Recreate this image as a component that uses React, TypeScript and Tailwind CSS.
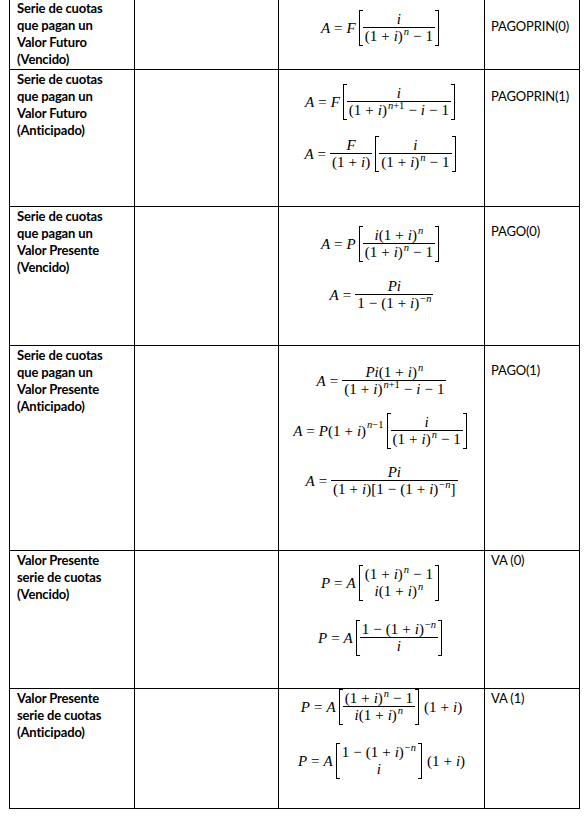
import type { ReactNode } from "react";

// small math helpers, laid out with inline flex boxes
function V({ children }: { children: ReactNode }) {
  return <i>{children}</i>;
}

function Sup({ children }: { children: ReactNode }) {
  return (
    <span className="relative -top-[6px] ml-[1px] text-[10.5px] leading-none">
      {children}
    </span>
  );
}

function Op({ children }: { children: ReactNode }) {
  return <span className="mx-[4px]">{children}</span>;
}

function Frac({
  num,
  den,
  line = true,
}: {
  num: ReactNode;
  den: ReactNode;
  line?: boolean;
}) {
  return (
    <span className="inline-flex flex-col text-center">
      <span className="whitespace-nowrap px-[2px] leading-[16px]">{num}</span>
      <span
        className={
          line
            ? "whitespace-nowrap border-t border-black px-[2px] leading-[17px]"
            : "whitespace-nowrap px-[2px] pt-[1px] leading-[17px]"
        }
      >
        {den}
      </span>
    </span>
  );
}

function Br({ children }: { children: ReactNode }) {
  return (
    <span className="mx-[3px] inline-flex items-stretch">
      <span className="my-[-1px] w-[4px] border-y border-l border-black" />
      {children}
      <span className="my-[-1px] w-[4px] border-y border-r border-black" />
    </span>
  );
}

function Eq({ children }: { children: ReactNode }) {
  return (
    <div className="flex items-center justify-center whitespace-nowrap font-['Liberation_Serif',serif] text-[15px] text-black">
      {children}
    </div>
  );
}

const onePlusI = (
  <>
    (1<Op>+</Op>
    <V>i</V>)
  </>
);

const powN = (
  <>
    {onePlusI}
    <Sup>
      <V>n</V>
    </Sup>
  </>
);

const powNeg = (
  <>
    {onePlusI}
    <Sup>
      −<V>n</V>
    </Sup>
  </>
);

const powN1 = (
  <>
    {onePlusI}
    <Sup>
      <V>n</V>+1
    </Sup>
  </>
);

const denN = (
  <>
    {powN}
    <Op>−</Op>1
  </>
);

const lhs = (a: string, b: string) => (
  <>
    <V>{a}</V>
    <Op>=</Op>
    <V>{b}</V>
  </>
);

type Row = {
  label: string[];
  code: string;
  h: string;
  eqPt: string;
  codePt: string;
  gap: string;
  eqs: ReactNode[];
};

const rows: Row[] = [
  {
    label: ["Serie de cuotas", "que pagan un", "Valor Futuro", "(Vencido)"],
    code: "PAGOPRIN(0)",
    h: "h-[70px] pt-[0px]",
    eqPt: "pt-[11px]",
    codePt: "pt-[18px]",
    gap: "gap-[20px]",
    eqs: [
      <Eq>
        {lhs("A", "F")}
        <Br>
          <Frac num={<V>i</V>} den={denN} />
        </Br>
      </Eq>,
    ],
  },
  {
    label: ["Serie de cuotas", "que pagan un", "Valor Futuro", "(Anticipado)"],
    code: "PAGOPRIN(1)",
    h: "h-[137px] pt-[1px]",
    eqPt: "pt-[15px]",
    codePt: "pt-[18px]",
    gap: "gap-[18px]",
    eqs: [
      <Eq>
        {lhs("A", "F")}
        <Br>
          <Frac
            num={<V>i</V>}
            den={
              <>
                {powN1}
                <Op>−</Op>
                <V>i</V>
                <Op>−</Op>1
              </>
            }
          />
        </Br>
      </Eq>,
      <Eq>
        <V>A</V>
        <Op>=</Op>
        <Frac num={<V>F</V>} den={onePlusI} />
        <Br>
          <Frac num={<V>i</V>} den={denN} />
        </Br>
      </Eq>,
    ],
  },
  {
    label: ["Serie de cuotas", "que pagan un", "Valor Presente", "(Vencido)"],
    code: "PAGO(0)",
    h: "h-[139px] pt-[1px]",
    eqPt: "pt-[20px]",
    codePt: "pt-[16px]",
    gap: "gap-[17px]",
    eqs: [
      <Eq>
        {lhs("A", "P")}
        <Br>
          <Frac
            num={
              <>
                <V>i</V>
                {powN}
              </>
            }
            den={denN}
          />
        </Br>
      </Eq>,
      <Eq>
        <V>A</V>
        <Op>=</Op>
        <Frac
          num={<V>Pi</V>}
          den={
            <>
              1<Op>−</Op>
              {powNeg}
            </>
          }
        />
      </Eq>,
    ],
  },
  {
    label: ["Serie de cuotas", "que pagan un", "Valor Presente", "(Anticipado)"],
    code: "PAGO(1)",
    h: "h-[205px] pt-[1px]",
    eqPt: "pt-[18px]",
    codePt: "pt-[16px]",
    gap: "gap-[16px]",
    eqs: [
      <Eq>
        <V>A</V>
        <Op>=</Op>
        <Frac
          num={
            <>
              <V>Pi</V>
              {powN}
            </>
          }
          den={
            <>
              {powN1}
              <Op>−</Op>
              <V>i</V>
              <Op>−</Op>1
            </>
          }
        />
      </Eq>,
      <Eq>
        {lhs("A", "P")}
        {onePlusI}
        <Sup>
          <V>n</V>−1
        </Sup>
        <Br>
          <Frac num={<V>i</V>} den={denN} />
        </Br>
      </Eq>,
      <Eq>
        <V>A</V>
        <Op>=</Op>
        <Frac
          num={<V>Pi</V>}
          den={
            <>
              {onePlusI}[1<Op>−</Op>
              {powNeg}]
            </>
          }
        />
      </Eq>,
    ],
  },
  {
    label: ["Valor Presente", "serie de cuotas", "(Vencido)"],
    code: "VA (0)",
    h: "h-[138px] pt-[1px]",
    eqPt: "pt-[15px]",
    codePt: "pt-[0px]",
    gap: "gap-[21px]",
    eqs: [
      <Eq>
        {lhs("P", "A")}
        <Br>
          <Frac
            line={false}
            num={denN}
            den={
              <>
                <V>i</V>
                {powN}
              </>
            }
          />
        </Br>
      </Eq>,
      <Eq>
        {lhs("P", "A")}
        <Br>
          <Frac
            num={
              <>
                1<Op>−</Op>
                {powNeg}
              </>
            }
            den={<V>i</V>}
          />
        </Br>
      </Eq>,
    ],
  },
  {
    label: ["Valor Presente", "serie de cuotas", "(Anticipado)"],
    code: "VA (1)",
    h: "h-[120px] pt-[1px]",
    eqPt: "pt-[0px]",
    codePt: "pt-[0px]",
    gap: "gap-[20px]",
    eqs: [
      <Eq>
        {lhs("P", "A")}
        <Br>
          <Frac
            num={denN}
            den={
              <>
                <V>i</V>
                {powN}
              </>
            }
          />
        </Br>
        <span className="ml-[2px]">{onePlusI}</span>
      </Eq>,
      <Eq>
        {lhs("P", "A")}
        <Br>
          <Frac
            line={false}
            num={
              <>
                1<Op>−</Op>
                {powNeg}
              </>
            }
            den={<V>i</V>}
          />
        </Br>
        <span className="ml-[2px]">{onePlusI}</span>
      </Eq>,
    ],
  },
];

export default function App() {
  return (
    <div className="min-h-[816px] w-[586px] bg-white pl-[9px]">
      <div className="grid w-[570px] grid-cols-[125px_144px_206px_95px] border-l border-black">
        {rows.map((row) => (
          <div key={row.code} className="contents">
            <div
              className={`${row.h} border-b border-r border-black pl-[7px] font-['Lato',sans-serif] text-[13px] font-bold leading-[17px] tracking-[-0.15px] text-black`}
            >
              {row.label.map((l) => (
                <div key={l}>{l}</div>
              ))}
            </div>
            <div className={`${row.h} border-b border-r border-black`} />
            <div
              className={`${row.h} ${row.eqPt} ${row.gap} flex flex-col border-b border-r border-black`}
            >
              {row.eqs.map((e, k) => (
                <div key={k}>{e}</div>
              ))}
            </div>
            <div
              className={`${row.h} ${row.codePt} border-b border-r border-black pl-[6px] font-['Lato',sans-serif] text-[13px] leading-[17px] tracking-[-0.15px] text-black`}
            >
              {row.code}
            </div>
          </div>
        ))}
      </div>
    </div>
  );
}
